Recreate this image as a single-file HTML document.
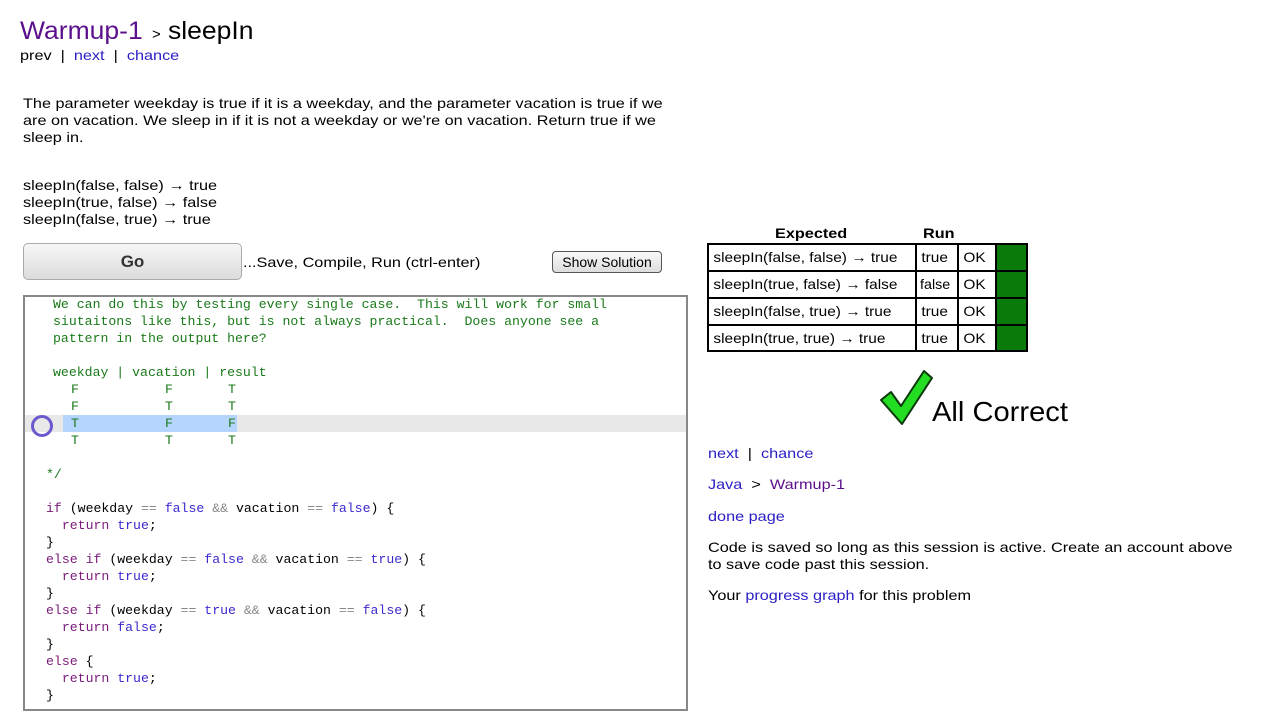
<!DOCTYPE html>
<html><head><style>
body{margin:0;background:#fff;font-family:"Liberation Sans",sans-serif;font-size:14px;color:#000;width:1280px;height:720px;overflow:hidden;position:relative}
.a{position:absolute;white-space:nowrap;transform-origin:0 0}
.s{transform:scaleX(1.16)}
.lk{color:#2a1fc4}
.code{position:absolute;left:23px;top:295px;width:661px;height:412px;border:2px solid #888;font-family:"Liberation Mono",monospace;font-size:13.2px;overflow:hidden}
.ln{position:absolute;left:0;height:17px;line-height:17px;white-space:pre}
.c{color:#1a7a1a}.k{color:#7a1a7a}.t{color:#3a2acf}.o{color:#888}
.tb{position:absolute;left:707px;top:243px;width:321px;height:109px;border:2px solid #000;box-sizing:border-box;background:#fff}
.r{position:absolute;left:0;right:0;height:27px;border-bottom:2px solid #000;box-sizing:border-box}
.cl{position:absolute;top:0;bottom:0;border-right:2px solid #000;box-sizing:border-box;line-height:25px;white-space:nowrap;overflow:hidden}
.cl span{display:inline-block;transform:scaleX(1.1);transform-origin:0 0;padding-left:4px}
.g{position:absolute;left:288px;right:0;top:0;bottom:0;background:#0a7a0a}
</style></head><body>
<div class="a" style="left:20px;top:17px;font-size:25px"><span style="color:#5b0f8b;display:inline-block;transform:scaleX(1.06);transform-origin:0 0;width:132px">Warmup-1</span><span style="font-size:15px">&gt;</span> <span style="display:inline-block;transform:scaleX(1.06);transform-origin:0 0">sleepIn</span></div>
<div class="a s" style="left:20px;top:47px">prev &nbsp;| &nbsp;<span class="lk">next</span> &nbsp;| &nbsp;<span class="lk">chance</span></div>
<div class="a s" style="left:23px;top:95px;line-height:17px">The parameter weekday is true if it is a weekday, and the parameter vacation is true if we<br>are on vacation. We sleep in if it is not a weekday or we're on vacation. Return true if we<br>sleep in.</div>
<div class="a s" style="left:23px;top:177px;line-height:17px">sleepIn(false, false) → true<br>sleepIn(true, false) → false<br>sleepIn(false, true) → true</div>
<div class="a" style="left:23px;top:243px;width:217px;height:35px;border:1px solid #aaa;border-radius:5px;background:linear-gradient(#f6f6f6,#dcdcdc);text-align:center;line-height:35px;font-weight:bold;font-size:17px;color:#333">Go</div>
<div class="a s" style="left:243px;top:254px">...Save, Compile, Run (ctrl-enter)</div>
<div class="a" style="left:552px;top:251px;width:108px;height:20px;border:1px solid #555;border-radius:4px;background:linear-gradient(#fafafa,#ddd);text-align:center;line-height:20px">Show Solution</div>
<div class="code">
<div class="ln" style="left:0;top:118px;width:661px;background:#e8e8e8"></div>
<div class="ln" style="left:38px;top:118px;width:174px;background:#b5d5ff"></div>
<div class="ln c" style="left:28px;top:-1px">We can do this by testing every single case.  This will work for small</div>
<div class="ln c" style="left:28px;top:16px">siutaitons like this, but is not always practical.  Does anyone see a</div>
<div class="ln c" style="left:28px;top:33px">pattern in the output here?</div>
<div class="ln c" style="left:28px;top:67px">weekday | vacation | result</div>
<div class="ln c" style="left:46px;top:84px">F</div><div class="ln c" style="left:140px;top:84px">F</div><div class="ln c" style="left:203px;top:84px">T</div>
<div class="ln c" style="left:46px;top:101px">F</div><div class="ln c" style="left:140px;top:101px">T</div><div class="ln c" style="left:203px;top:101px">T</div>
<div class="ln c" style="left:46px;top:118px">T</div><div class="ln c" style="left:140px;top:118px">F</div><div class="ln c" style="left:203px;top:118px">F</div>
<div class="ln c" style="left:46px;top:135px">T</div><div class="ln c" style="left:140px;top:135px">T</div><div class="ln c" style="left:203px;top:135px">T</div>
<div class="ln c" style="left:21px;top:169px">*/</div>
<div class="ln" style="left:21px;top:203px"><span class="k">if</span> (weekday <span class="o">==</span> <span class="t">false</span> <span class="o">&amp;&amp;</span> vacation <span class="o">==</span> <span class="t">false</span>) {</div>
<div class="ln" style="left:21px;top:220px">  <span class="k">return</span> <span class="t">true</span>;</div>
<div class="ln" style="left:21px;top:237px">}</div>
<div class="ln" style="left:21px;top:254px"><span class="k">else if</span> (weekday <span class="o">==</span> <span class="t">false</span> <span class="o">&amp;&amp;</span> vacation <span class="o">==</span> <span class="t">true</span>) {</div>
<div class="ln" style="left:21px;top:271px">  <span class="k">return</span> <span class="t">true</span>;</div>
<div class="ln" style="left:21px;top:288px">}</div>
<div class="ln" style="left:21px;top:305px"><span class="k">else if</span> (weekday <span class="o">==</span> <span class="t">true</span> <span class="o">&amp;&amp;</span> vacation <span class="o">==</span> <span class="t">false</span>) {</div>
<div class="ln" style="left:21px;top:322px">  <span class="k">return</span> <span class="t">false</span>;</div>
<div class="ln" style="left:21px;top:339px">}</div>
<div class="ln" style="left:21px;top:356px"><span class="k">else</span> {</div>
<div class="ln" style="left:21px;top:373px">  <span class="k">return</span> <span class="t">true</span>;</div>
<div class="ln" style="left:21px;top:390px">}</div>
</div>
<div class="a" style="left:31px;top:415px;width:22px;height:22px;border:3px solid #6a5acd;border-radius:50%;box-sizing:border-box"></div>
<div class="a s" style="left:775px;top:225px;font-weight:bold">Expected</div>
<div class="a s" style="left:923px;top:225px;font-weight:bold">Run</div>
<div class="tb">
<div class="r" style="top:0"><div class="cl" style="left:0;width:208px"><span>sleepIn(false, false) → true</span></div><div class="cl" style="left:208px;width:42px"><span>true</span></div><div class="cl" style="left:250px;width:38px"><span>OK</span></div><div class="g"></div></div>
<div class="r" style="top:27px"><div class="cl" style="left:0;width:208px"><span>sleepIn(true, false) → false</span></div><div class="cl" style="left:208px;width:42px"><span style="padding-left:3px;transform:scaleX(1.02)">false</span></div><div class="cl" style="left:250px;width:38px"><span>OK</span></div><div class="g"></div></div>
<div class="r" style="top:54px"><div class="cl" style="left:0;width:208px"><span>sleepIn(false, true) → true</span></div><div class="cl" style="left:208px;width:42px"><span>true</span></div><div class="cl" style="left:250px;width:38px"><span>OK</span></div><div class="g"></div></div>
<div class="r" style="top:81px;height:24px;border-bottom:0"><div class="cl" style="left:0;width:208px"><span>sleepIn(true, true) → true</span></div><div class="cl" style="left:208px;width:42px"><span>true</span></div><div class="cl" style="left:250px;width:38px"><span>OK</span></div><div class="g"></div></div>
</div>
<svg class="a" style="left:878px;top:368px" width="56" height="58" viewBox="0 0 56 58"><path d="M3 32 L13 24 L23 38 L46 3 L54 10 L24 56 Z" fill="#22dd22" stroke="#0a3a0a" stroke-width="2" stroke-linejoin="round"/></svg>
<div class="a" style="left:932px;top:396px;font-size:28px;transform:scaleX(1.04)">All Correct</div>
<div class="a s" style="left:708px;top:445px"><span class="lk">next</span> &nbsp;| &nbsp;<span class="lk">chance</span></div>
<div class="a s" style="left:708px;top:476px"><span class="lk">Java</span> &nbsp;&gt; &nbsp;<span style="color:#5b0f8b">Warmup-1</span></div>
<div class="a s lk" style="left:708px;top:508px">done page</div>
<div class="a s" style="left:708px;top:539px;line-height:17px">Code is saved so long as this session is active. Create an account above<br>to save code past this session.</div>
<div class="a s" style="left:708px;top:587px">Your <span class="lk">progress graph</span> for this problem</div>
</body></html>
